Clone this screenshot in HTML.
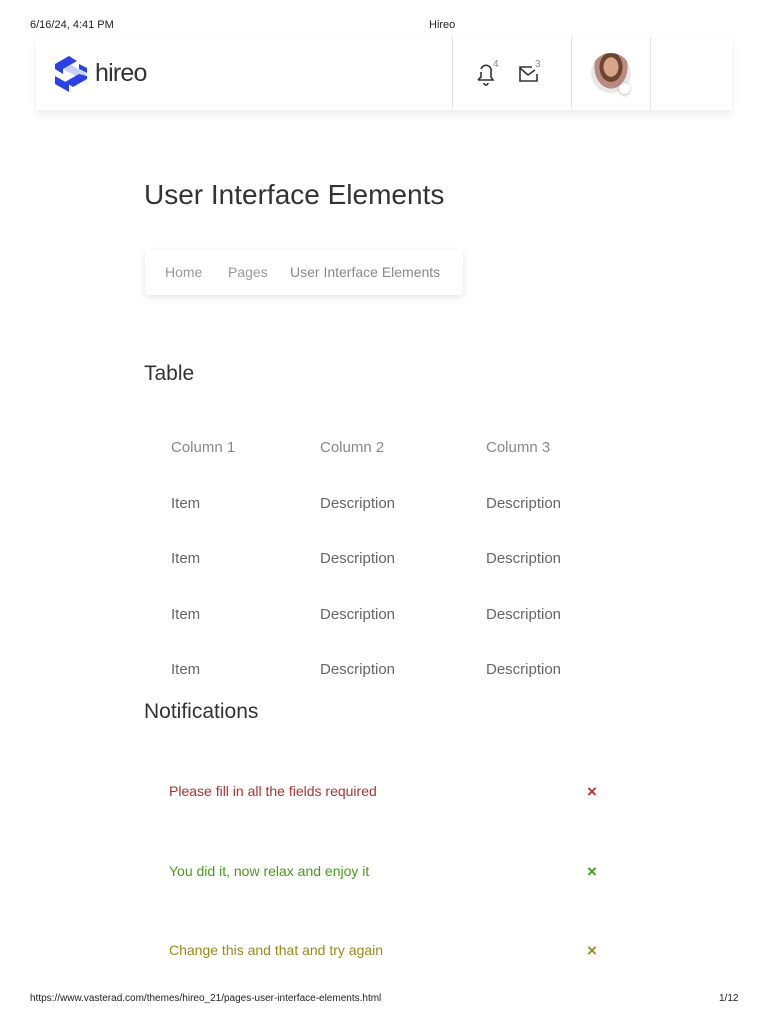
<!DOCTYPE html>
<html><head><meta charset="utf-8"><style>
body{margin:0;width:768px;height:1024px;background:#fff;font-family:"Liberation Sans",sans-serif;position:relative;overflow:hidden;color:#333}
.a{position:absolute}
.hdr{left:36px;top:37px;width:696px;height:73px;background:#fff;box-shadow:0 4px 8px rgba(0,0,0,.08)}
.vl{position:absolute;top:0;width:1px;height:73px;background:#e6e6e6}
.t{font-size:15px;color:#666}
.n{font-size:14px}
.x{font-size:17px;font-weight:bold}
</style></head><body>
<div class="a" style="left:30px;top:19px;font-size:11px;color:#222">6/16/24, 4:41 PM</div>
<div class="a" style="left:429px;top:19px;font-size:11px;color:#222">Hireo</div>
<div class="a hdr">
 <svg class="a" style="left:17px;top:17px" width="36" height="40" viewBox="0 0 36 40">
  <path d="M2 10 L16 2 L24 7 L10 15 L10 20 L2 15Z" fill="#2a41e8"/>
  <path d="M10 15 L26 24 L34 20 L18 11Z" fill="#c8cff9"/>
  <path d="M34 25 L20 33 L12 28 L26 20 L34 22Z" fill="#2a41e8"/>
  <path d="M2 22 L16 30 L16 38 L2 30Z" fill="#2a41e8"/>
  <path d="M26 10 L34 14 L34 19 L26 15Z" fill="#2a41e8"/>
 </svg>
 <div class="a" style="left:59px;top:22px;font-size:25px;color:#333;letter-spacing:-0.8px">hireo</div>
 <div class="vl" style="left:416px"></div>
 <div class="vl" style="left:535px"></div>
 <div class="vl" style="left:614px"></div>
 <svg class="a" style="left:439px;top:26px" width="22" height="24" viewBox="0 0 22 24" fill="none" stroke="#333" stroke-width="1.6"><path d="M3 17 H18 L16 14 V9 A5 5 0 0 0 6 6"/><path d="M6 9V14L3 17"/><path d="M9 20 A2 2 0 0 0 13 20"/></svg>
 <div class="a" style="left:457px;top:22px;font-size:10px;color:#888">4</div>
 <svg class="a" style="left:482px;top:28px" width="22" height="20" viewBox="0 0 22 20" fill="none" stroke="#333" stroke-width="1.6"><path d="M14 2H2V16H19V9"/><path d="M2 3L10 10L17 5"/></svg>
 <div class="a" style="left:499px;top:22px;font-size:10px;color:#888">3</div>
 <div class="a" style="left:555px;top:16px;width:40px;height:40px;border-radius:50%;background:radial-gradient(ellipse at 50% 35%,#d9a58a 0 26%,#6b4530 27% 40%,#b88a80 41% 58%,#e8e8e8 59%)"></div>
 <div class="a" style="left:583px;top:46px;width:11px;height:11px;border-radius:50%;background:#fff;box-shadow:0 1px 3px rgba(0,0,0,.3)"></div>
</div>
<div class="a" style="left:144px;top:179px;font-size:28px;color:#333">User Interface Elements</div>
<div class="a" style="left:145px;top:250px;width:318px;height:45px;background:#fff;border-radius:4px;box-shadow:0 2px 8px rgba(0,0,0,.12)">
 <span class="a" style="left:20px;top:14px;font-size:14px;color:#999">Home</span>
 <span class="a" style="left:83px;top:14px;font-size:14px;color:#999">Pages</span>
 <span class="a" style="left:145px;top:14px;font-size:14px;color:#888">User Interface Elements</span>
</div>
<div class="a" style="left:144px;top:362px;font-size:21px">Table</div>
<div class="a t" style="left:171px;top:439px;color:#888">Column 1</div>
<div class="a t" style="left:320px;top:439px;color:#888">Column 2</div>
<div class="a t" style="left:486px;top:439px;color:#888">Column 3</div>
<div class="a t" style="left:171px;top:495px">Item</div><div class="a t" style="left:320px;top:495px">Description</div><div class="a t" style="left:486px;top:495px">Description</div>
<div class="a t" style="left:171px;top:550px">Item</div><div class="a t" style="left:320px;top:550px">Description</div><div class="a t" style="left:486px;top:550px">Description</div>
<div class="a t" style="left:171px;top:606px">Item</div><div class="a t" style="left:320px;top:606px">Description</div><div class="a t" style="left:486px;top:606px">Description</div>
<div class="a t" style="left:171px;top:661px">Item</div><div class="a t" style="left:320px;top:661px">Description</div><div class="a t" style="left:486px;top:661px">Description</div>
<div class="a" style="left:144px;top:700px;font-size:21px">Notifications</div>
<div class="a n" style="left:169px;top:783px;color:#a33">Please fill in all the fields required</div><div class="a x" style="left:587px;top:782px;color:#b33">×</div>
<div class="a n" style="left:169px;top:863px;color:#4a9a1a">You did it, now relax and enjoy it</div><div class="a x" style="left:587px;top:862px;color:#4a9a1a">×</div>
<div class="a n" style="left:169px;top:942px;color:#9a8a1a">Change this and that and try again</div><div class="a x" style="left:587px;top:941px;color:#9a8a1a">×</div>
<div class="a" style="left:30px;top:993px;font-size:10px;color:#222">https://www.vasterad.com/themes/hireo_21/pages-user-interface-elements.html</div>
<div class="a" style="left:719px;top:993px;font-size:10px;color:#222">1/12</div>
</body></html>
